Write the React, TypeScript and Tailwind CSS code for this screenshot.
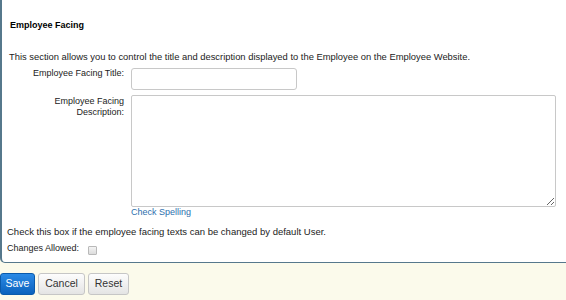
import React from 'react';

const font = { fontFamily: '"Liberation Sans", Arial, sans-serif' };

const App: React.FC = () => {
  return (
    <div className="w-[566px] h-[300px] bg-[#fbfaeb] overflow-hidden flex flex-col text-[#222]" style={font}>
      {/* panel */}
      <div className="h-[263px] bg-white border-l-2 border-b border-[#56788c] rounded-bl-[5px] flex flex-col text-[9px] leading-[11px]">
        <div className="pt-[20px] pl-[8px] font-bold text-black">Employee Facing</div>

        <div className="pt-[20px] pl-[7px] text-[9.4px]">
          This section allows you to control the title and description displayed to the Employee on the Employee Website.
        </div>

        <div className="flex mt-[5px] gap-[7px]">
          <div className="w-[122px] text-right pt-[1px]">Employee Facing Title:</div>
          <input
            type="text"
            className="w-[166px] h-[22px] mt-[1px] border border-[#c8c8c8] rounded-[3px] bg-white outline-none"
          />
        </div>

        <div className="flex mt-[5px] gap-[7px]">
          <div className="w-[122px] text-right pl-[40px] pt-[1px]">
            Employee Facing
            <br />
            Description:
          </div>
          <div className="flex flex-col">
            <textarea className="w-[425px] h-[112px] border border-[#c8c8c8] rounded-[2px] bg-white outline-none resize-y" />
            <a className="text-[#2d6fae] cursor-pointer">Check Spelling</a>
          </div>
        </div>

        <div className="pl-[5px] mt-[8px] text-[9.5px]">
          Check this box if the employee facing texts can be changed by default User.
        </div>

        <div className="pl-[5px] mt-[5px] flex items-center gap-[9px]">
          <span>Changes Allowed:</span>
          <span className="w-[9px] h-[9px] mt-[4px] border border-[#b9b9b9] rounded-[1px] bg-gradient-to-b from-[#f4f4f4] to-[#dcdcdc] inline-block" />
        </div>
      </div>

      {/* footer buttons */}
      <div className="flex gap-[3px] pt-[10px] text-[10.5px]">
        <button className="w-[35px] h-[22px] rounded-[3px] bg-gradient-to-b from-[#2a8ae6] to-[#0a62bd] border border-[#0a5aab] text-white">
          Save
        </button>
        <button className="w-[47px] h-[22px] rounded-[3px] bg-gradient-to-b from-[#fdfdfd] to-[#e4e4e4] border border-[#c6c6c6] text-[#333]">
          Cancel
        </button>
        <button className="w-[41px] h-[22px] rounded-[3px] bg-gradient-to-b from-[#fdfdfd] to-[#e4e4e4] border border-[#c6c6c6] text-[#333]">
          Reset
        </button>
      </div>
    </div>
  );
};

export default App;
